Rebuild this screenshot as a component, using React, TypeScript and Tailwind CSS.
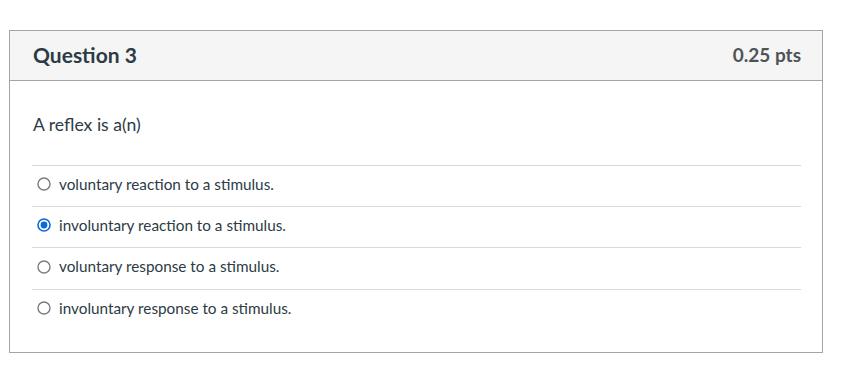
import { FC } from "react";

type Answer = {
  id: string;
  text: string;
};

const answers: Answer[] = [
  { id: "a1", text: "voluntary reaction to a stimulus." },
  { id: "a2", text: "involuntary reaction to a stimulus." },
  { id: "a3", text: "voluntary response to a stimulus." },
  { id: "a4", text: "involuntary response to a stimulus." },
];

const Radio: FC<{ checked: boolean }> = ({ checked }) => (
  <svg width="14" height="14" viewBox="0 0 14 14" className="shrink-0">
    {checked ? (
      <>
        <circle cx="7" cy="7" r="6" fill="white" stroke="#0b6bd6" strokeWidth="1.6" />
        <circle cx="7" cy="7" r="3.4" fill="#0b6bd6" />
      </>
    ) : (
      <circle cx="7" cy="7" r="6" fill="white" stroke="#7b7b82" strokeWidth="1.4" />
    )}
  </svg>
);

const App: FC = () => {
  const selected = "a2";

  return (
    <div
      className="w-[855px] h-[366px] bg-white pt-[30px] pl-[9px]"
      style={{ fontFamily: "Lato, 'Open Sans', sans-serif" }}
    >
      <div className="w-[814px] border border-[#a5a5a5]">
        <div className="h-[50px] flex items-center justify-between pl-[23px] pr-[21px] pb-[3px] bg-[#f5f5f5] border-b border-[#a5a5a5]">
          <h2 className="text-[21px] font-bold text-[#2d3b45] leading-none">Question 3</h2>
          <span className="text-[19px] font-bold text-[#4f5358] leading-none">0.25 pts</span>
        </div>
        <div className="pt-[32px] pb-[22px] pl-[22px] pr-[21px]">
          <p className="text-[17.6px] leading-6 text-[#2d3b45] pl-px mb-[28px]">A reflex is a(n)</p>
          <div>
            {answers.map((answer, i) => (
              <label
                key={answer.id}
                className={`flex items-center gap-[8px] border-t border-[#d9d9d9] pl-[5px] pb-[4px] text-[15.3px] text-[#2d3b45] ${
                  i === 2 ? "h-[42px]" : "h-[41px]"
                }`}
              >
                <Radio checked={answer.id === selected} />
                <span>{answer.text}</span>
              </label>
            ))}
          </div>
        </div>
      </div>
    </div>
  );
};

export default App;
